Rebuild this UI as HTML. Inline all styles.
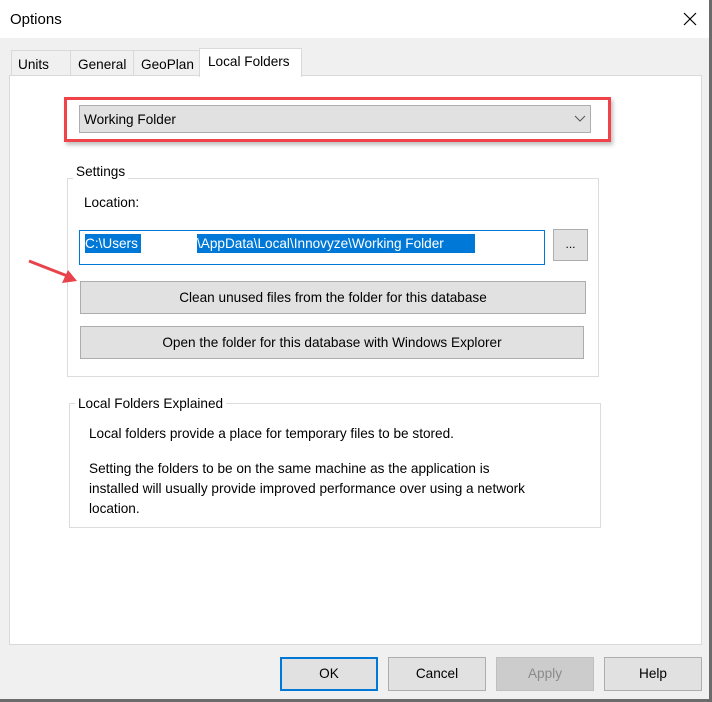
<!DOCTYPE html>
<html><head><style>
*{box-sizing:border-box;margin:0;padding:0}
body{width:712px;height:702px;background:#f0f0f0;font-family:"Liberation Sans",sans-serif;font-size:13.6px;color:#000;position:relative;overflow:hidden}
.a{position:absolute}
.btn{position:absolute;background:#e1e1e1;border:1px solid #adadad;text-align:center;white-space:nowrap}
.grp{position:absolute;border:1px solid #dcdcdc}
.leg{position:absolute;background:#fff;padding:0 3px}
</style></head><body>
<div class="a" style="left:0;top:0;width:712px;height:38px;background:#fff"></div>
<div class="a" style="left:10px;top:11px;font-size:15px">Options</div>
<svg class="a" style="left:682px;top:11px" width="16" height="16"><path d="M2 2L14 14M14 2L2 14" stroke="#000" stroke-width="1.2"/></svg>
<div class="a" style="left:709px;top:0;width:3px;height:702px;background:#6b6b6b"></div>
<div class="a" style="left:0;top:699px;width:712px;height:3px;background:#6b6b6b"></div>
<!-- tabs -->
<div class="a" style="left:11px;top:50px;width:60px;height:26px;border:1px solid #d9d9d9;background:#f0f0f0;padding:6px 0 0 6px">Units</div>
<div class="a" style="left:70px;top:50px;width:64px;height:26px;border:1px solid #d9d9d9;background:#f0f0f0;padding:6px 0 0 7px">General</div>
<div class="a" style="left:133px;top:50px;width:67px;height:26px;border:1px solid #d9d9d9;background:#f0f0f0;padding:6px 0 0 7px">GeoPlan</div>
<div class="a" style="left:9px;top:75px;width:693px;height:570px;background:#fff;border:1px solid #d9d9d9"></div>
<div class="a" style="left:199px;top:48px;width:103px;height:29px;border:1px solid #d9d9d9;border-bottom:none;background:#fff;padding:5px 0 0 8px">Local Folders</div>
<!-- combo -->
<div class="a" style="left:64px;top:97px;width:547px;height:45px;border:3px solid #f04349;box-shadow:2px 3px 4px rgba(0,0,0,.25)"></div>
<div class="a" style="left:79px;top:105px;width:512px;height:28px;background:#e1e1e1;border:1px solid #adadad;padding:6px 0 0 4px">Working Folder</div>
<svg class="a" style="left:574px;top:115px" width="12" height="8"><path d="M1 1L6 6L11 1" stroke="#555" fill="none"/></svg>
<!-- settings -->
<div class="grp" style="left:67px;top:178px;width:532px;height:199px"></div>
<div class="leg" style="left:73px;top:164px">Settings</div>
<div class="a" style="left:84px;top:195px">Location:</div>
<div class="a" style="left:79px;top:230px;width:466px;height:35px;border:1px solid #0078d7;background:#fff"></div>
<div class="a" style="left:85px;top:234px;height:19px;width:56px;background:#0078d7;color:#fff;padding-top:2px;overflow:hidden;white-space:nowrap">C:\Users</div>
<div class="a" style="left:197px;top:234px;height:19px;width:278px;background:#0078d7;color:#fff;padding-top:2px;white-space:nowrap">\AppData\Local\Innovyze\Working Folder</div>
<div class="btn" style="left:553px;top:229px;width:35px;height:32px;padding-top:7px;font-size:12px">...</div>
<div class="btn" style="left:80px;top:281px;width:506px;height:33px;padding-top:8px">Clean unused files from the folder for this database</div>
<div class="btn" style="left:80px;top:326px;width:504px;height:33px;padding-top:8px">Open the folder for this database with Windows Explorer</div>
<svg class="a" style="left:26px;top:256px" width="52" height="30"><path d="M3 5L44 21" stroke="#e8424a" stroke-width="3"/><path d="M51 25L36 27L42 14Z" fill="#e8424a"/></svg>
<!-- explained -->
<div class="grp" style="left:69px;top:403px;width:532px;height:125px"></div>
<div class="leg" style="left:75px;top:396px">Local Folders Explained</div>
<div class="a" style="left:89px;top:426px">Local folders provide a place for temporary files to be stored.</div>
<div class="a" style="left:89px;top:459px;line-height:20px;width:500px;white-space:nowrap">Setting the folders to be on the same machine as the application is<br>installed will usually provide improved performance over using a network<br>location.</div>
<!-- bottom buttons -->
<div class="btn" style="left:280px;top:657px;width:98px;height:34px;border:2px solid #0078d7;padding-top:7px">OK</div>
<div class="btn" style="left:388px;top:657px;width:98px;height:34px;padding-top:8px">Cancel</div>
<div class="btn" style="left:496px;top:657px;width:98px;height:34px;padding-top:8px;background:#cccccc;border-color:#bfbfbf;color:#8a8a8a">Apply</div>
<div class="btn" style="left:604px;top:657px;width:98px;height:34px;padding-top:8px">Help</div>
</body></html>
